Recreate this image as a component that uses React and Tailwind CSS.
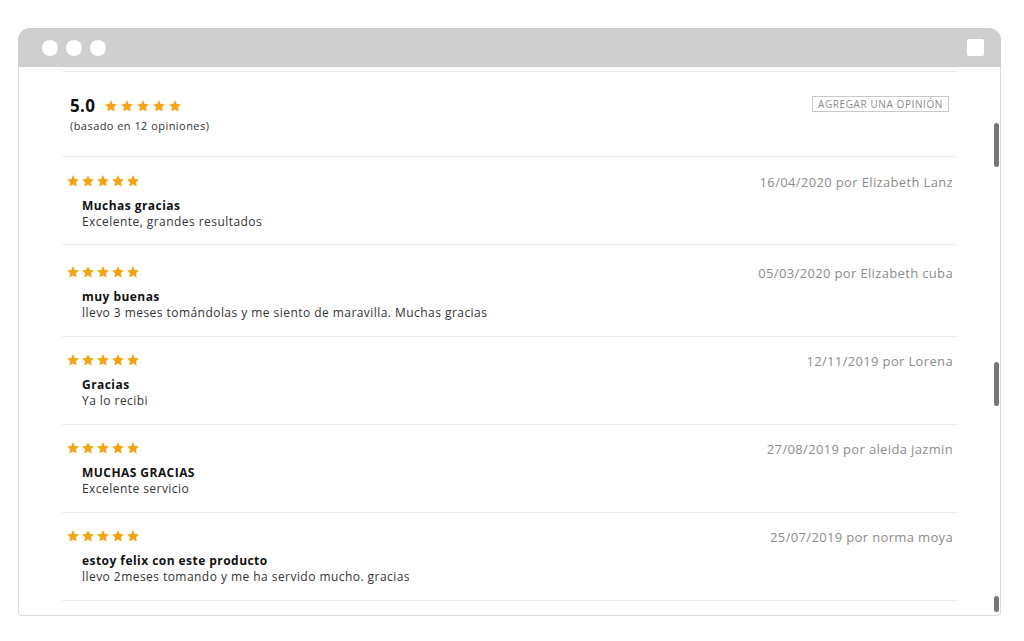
import React from "react";

const reviews = [
  {
    date: "16/04/2020",
    author: "Elizabeth Lanz",
    title: "Muchas gracias",
    body: "Excelente, grandes resultados",
    h: "h-[88px]",
    pt: "pt-[17px]",
  },
  {
    date: "05/03/2020",
    author: "Elizabeth cuba",
    title: "muy buenas",
    body: "llevo 3 meses tomándolas y me siento de maravilla. Muchas gracias",
    h: "h-[92px]",
    pt: "pt-[20px]",
  },
  {
    date: "12/11/2019",
    author: "Lorena",
    title: "Gracias",
    body: "Ya lo recibi",
    h: "h-[88px]",
    pt: "pt-[16px]",
  },
  {
    date: "27/08/2019",
    author: "aleida jazmin",
    title: "MUCHAS GRACIAS",
    body: "Excelente servicio",
    h: "h-[88px]",
    pt: "pt-[16px]",
  },
  {
    date: "25/07/2019",
    author: "norma moya",
    title: "estoy felix con este producto",
    body: "llevo 2meses tomando y me ha servido mucho. gracias",
    h: "h-[88px]",
    pt: "pt-[16px]",
  },
];

function Star() {
  return (
    <svg viewBox="0 0 24 24" className="h-[14px] w-[14px]" fill="#f5a415">
      <path d="M12 1.8l3.1 6.6 7.2.9-5.3 5 1.4 7.1L12 17.9l-6.4 3.5L7 14.3l-5.3-5 7.2-.9z" />
    </svg>
  );
}

function Stars() {
  return (
    <div className="flex items-center gap-[1px]">
      {[0, 1, 2, 3, 4].map((i) => (
        <Star key={i} />
      ))}
    </div>
  );
}

function ReviewRow({ r }) {
  return (
    <div className={`border-b border-[#ececec] ${r.h}`}>
      <div className={`flex items-start justify-between pl-[4px] pr-[4px] ${r.pt}`}>
        <Stars />
        <div className="text-[13px] leading-[16px] tracking-[0.35px] text-[#8c8c8c]">
          {r.date} por {r.author}
        </div>
      </div>
      <div className="pl-[20px] pt-[8px]">
        <div className="text-[12px] font-bold leading-[16px] tracking-[0.45px] text-[#111]">
          {r.title}
        </div>
        <div className="text-[12px] leading-[16px] tracking-[0.45px] text-[#333]">{r.body}</div>
      </div>
    </div>
  );
}

export default function App() {
  return (
    <div
      className="h-[641px] w-[1024px] bg-white pt-[28px] pl-[18px]"
      style={{ fontFamily: '"Open Sans", "Liberation Sans", sans-serif' }}
    >
      <div className="w-[983px]">
        {/* title bar */}
        <div className="flex h-[39px] items-center justify-between rounded-t-[12px] bg-[#cfcfcf] pl-[24px] pr-[17px]">
          <div className="flex items-center gap-[8px]">
            <div className="h-[16px] w-[16px] rounded-full bg-white" />
            <div className="h-[16px] w-[16px] rounded-full bg-white" />
            <div className="h-[16px] w-[16px] rounded-full bg-white" />
          </div>
          <div className="h-[17px] w-[17px] rounded-[2px] bg-white" />
        </div>

        {/* body */}
        <div className="relative h-[549px] overflow-hidden rounded-b-[4px] border border-t-0 border-[#dcdcdc] bg-white">
          <div className="ml-[43px] mt-[4px] w-[895px] border-t border-[#ececec]">
            <div className="flex h-[85px] items-start justify-between border-b border-[#ececec] pl-[8px] pr-[8px] pt-[23px]">
              <div>
                <div className="flex items-center gap-[9px]">
                  <span className="text-[17px] font-bold leading-[22px] tracking-[0.3px] text-[#111]">
                    5.0
                  </span>
                  <div className="flex items-center gap-[2px]">
                    {[0, 1, 2, 3, 4].map((i) => (
                      <Star key={i} />
                    ))}
                  </div>
                </div>
                <div className="mt-[2px] text-[11px] leading-[14px] tracking-[0.45px] text-[#333]">
                  (basado en 12 opiniones)
                </div>
              </div>
              <button className="mt-[1px] border border-[#c8c8c8] px-[5px] text-[10px] leading-[14px] tracking-[0.6px] text-[#8a8a8a]">
                AGREGAR UNA OPINIÓN
              </button>
            </div>
            {reviews.map((r) => (
              <ReviewRow key={r.date} r={r} />
            ))}
          </div>

          {/* scroll marks */}
          <div className="absolute right-[1px] top-[56px] h-[44px] w-[5px] rounded-full bg-[#777]" />
          <div className="absolute right-[1px] top-[295px] h-[44px] w-[5px] rounded-full bg-[#777]" />
          <div className="absolute right-[1px] top-[529px] h-[16px] w-[5px] rounded-full bg-[#777]" />
        </div>
      </div>
    </div>
  );
}
